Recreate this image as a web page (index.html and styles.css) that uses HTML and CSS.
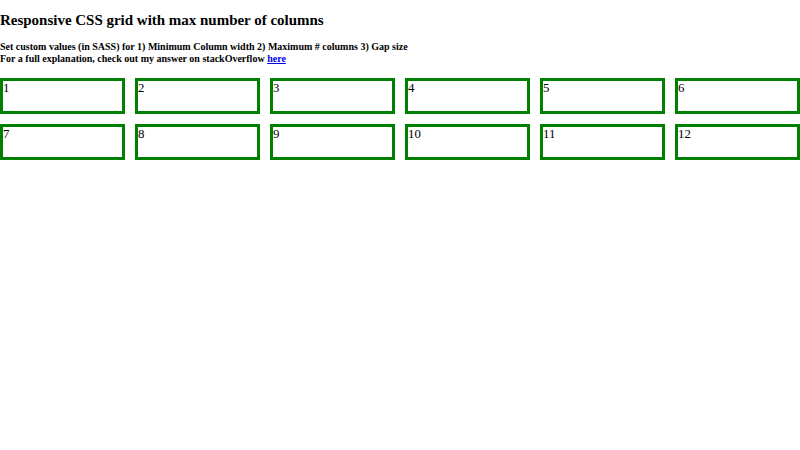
FILE: index.html
```html
<!DOCTYPE html>
<html>
<head>
<meta charset="utf-8">
<link rel="stylesheet" href="styles.css">
</head>
<body>
<h3 class="title">Responsive CSS grid with max number of columns</h3>
<h5 class="intro">Set custom values (in SASS) for 1) Minimum Column width 2) Maximum # columns 3) Gap size<br>For a full explanation, check out my answer on stackOverflow <a href="#">here</a></h5>
<div class="grid">
  <div class="item">1</div>
  <div class="item">2</div>
  <div class="item">3</div>
  <div class="item">4</div>
  <div class="item">5</div>
  <div class="item">6</div>
  <div class="item">7</div>
  <div class="item">8</div>
  <div class="item">9</div>
  <div class="item">10</div>
  <div class="item">11</div>
  <div class="item">12</div>
</div>
</body>
</html>
```
FILE: styles.css
```css
body {
  margin: 0;
  font-family: "Liberation Serif", "Times New Roman", serif;
  background: #fff;
  color: #000;
}
.title {
  font-size: 14.98px;
  margin: 12px 0 0;
}
.intro {
  font-size: 10px;
  line-height: 12px;
  margin: 12px 0 0;
}
.intro a {
  color: #0000ee;
}
.grid {
  display: grid;
  grid-template-columns: repeat(6, 1fr);
  gap: 10px;
  margin-top: 13px;
}
.item {
  border: 3px solid #008000;
  height: 30px;
  font-size: 12.8px;
}
```
